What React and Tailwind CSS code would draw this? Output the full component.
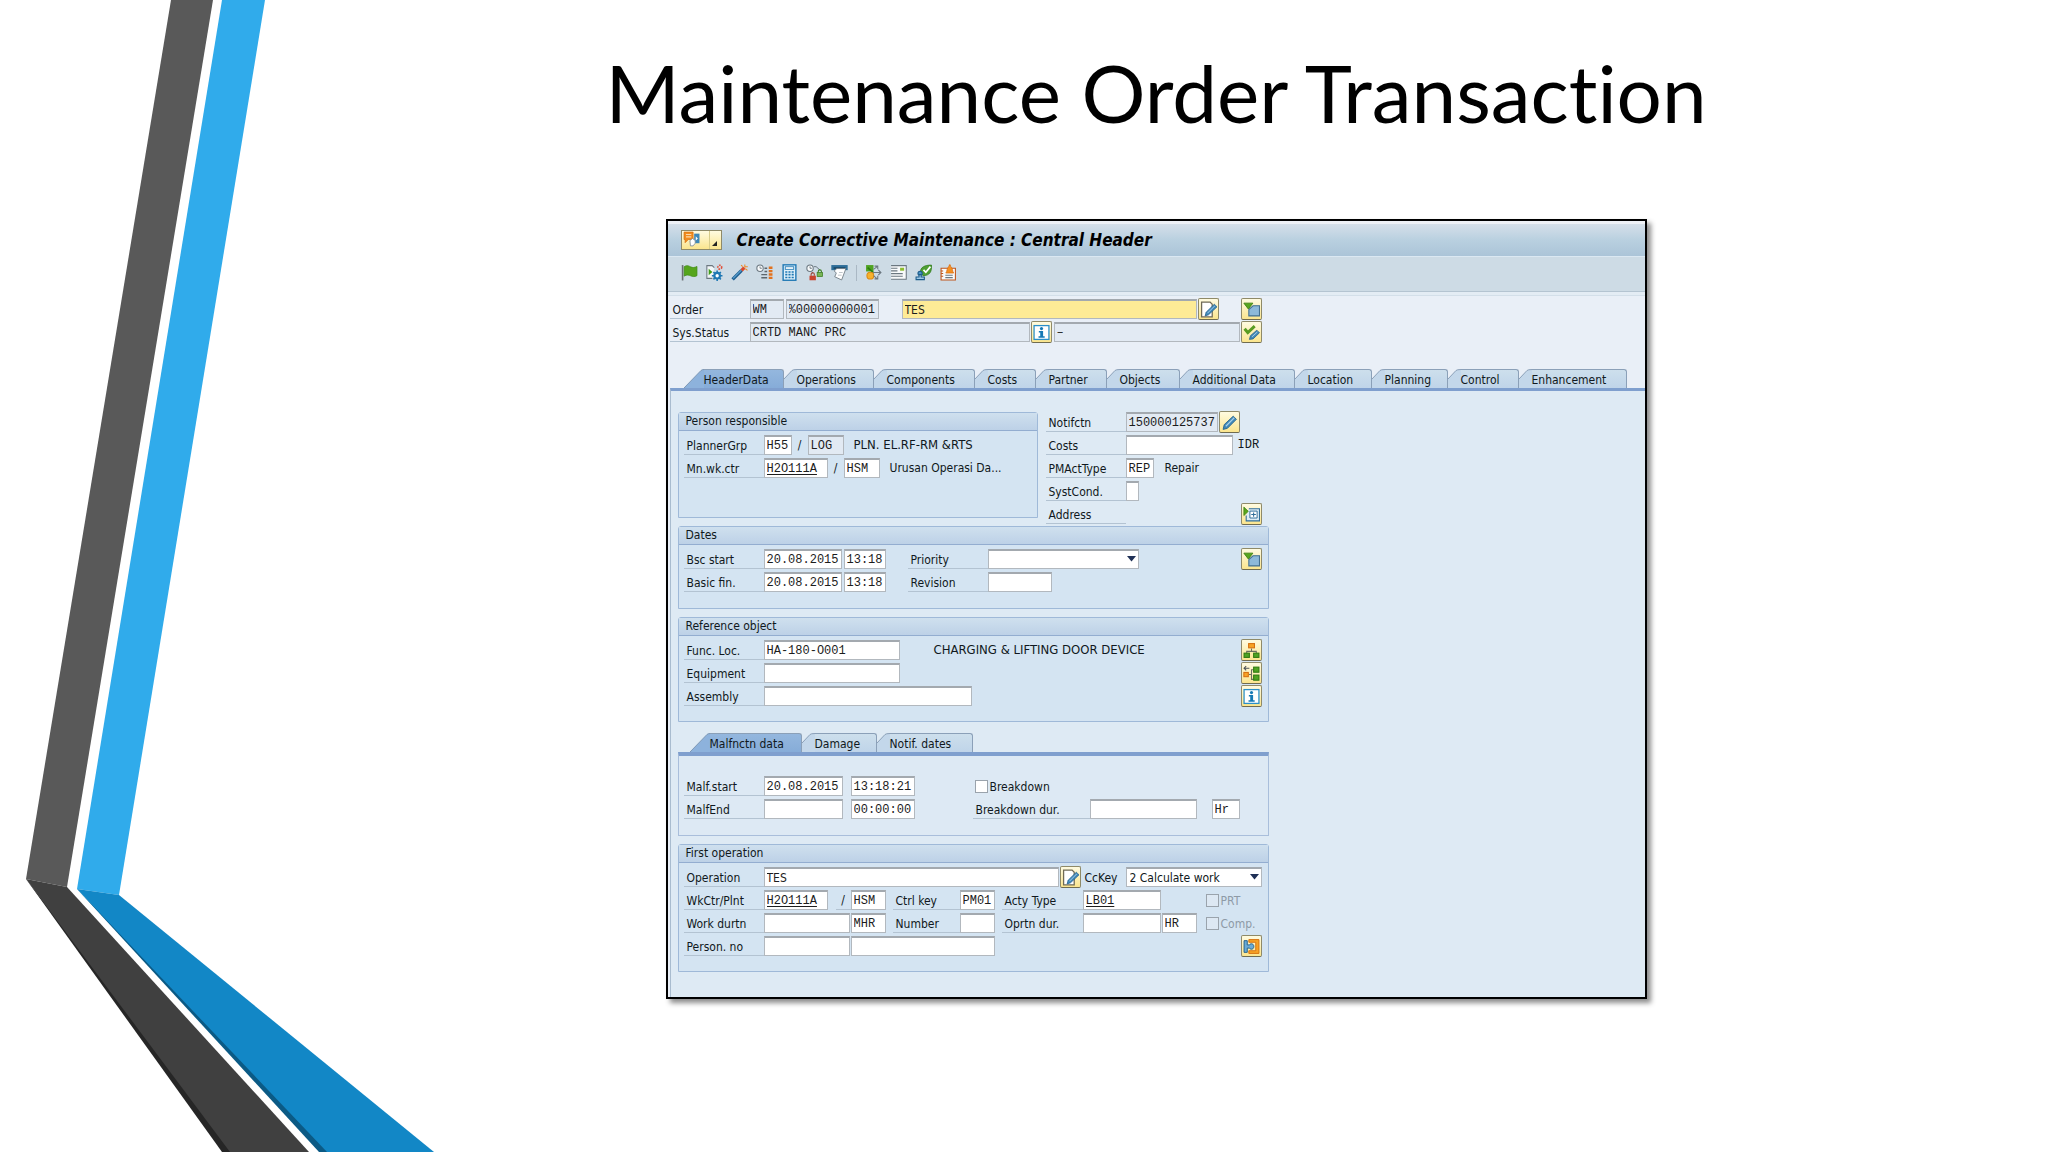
const UI = "font-['DejaVu_Sans_Condensed','DejaVu_Sans',sans-serif]";
const MONO = "font-['Liberation_Mono',monospace]";

function Ribbon() {
  return (
    <svg
      className="w-[434px] shrink-0 self-stretch"
      viewBox="0 0 434 1152"
      preserveAspectRatio="none"
      aria-hidden="true"
    >
      <polygon points="171,0 213,0 67,887 26,879" fill="#595959" />
      <polygon points="222,0 265,0 119,895 77,889" fill="#30abeb" />
      <polygon points="26,879 240,1152 222,1152" fill="#262626" />
      <polygon points="26,879 67,887 309,1152 230,1152" fill="#404040" />
      <polygon points="77,889 340,1152 319,1152" fill="#0b5a85" />
      <polygon points="77,889 119,895 434,1152 327,1152" fill="#1287c6" />
    </svg>
  );
}

/* ---------- icons ---------- */

function Svg({ children, className = "size-[17px]" }) {
  return (
    <svg className={className} viewBox="0 0 16 16" fill="none" aria-hidden="true">
      {children}
    </svg>
  );
}

const icons = {
  flag: (
    <Svg>
      <path d="M1.500 1v14.500" stroke="#6b6f73" strokeWidth="1.500" />
      <path d="M3 2.500c2.500-1.800 4.500-.6 6 .2 2 .9 3.800.8 6-.4V11c-2.200 1.100-4 1-6 .1-1.500-.7-3.500-1.300-6 .3z" fill="#55a51c" stroke="#3d8a12" strokeWidth=".7" />
    </Svg>
  ),
  docGear: (
    <Svg>
      <path d="M6 13.500H.8V1.500h5l2 2" stroke="#6b7780" fill="#f2f6f8" />
      <path d="M2.500 4.500 6 7.500l-3.500 3z" fill="#3f9c1b" />
      <path d="M10.500 6v10M5.500 11h10M7 7.500l7 7M14 7.500l-7 7" stroke="#1f78b4" strokeWidth="1.500" />
      <circle cx="10.500" cy="11" r="2.600" stroke="#1f78b4" strokeWidth="2" fill="#fff" />
      <circle cx="13" cy="3" r="1.800" stroke="#e0523c" strokeWidth="1.500" strokeDasharray="1.500 .8" />
    </Svg>
  ),
  wand: (
    <Svg>
      <path d="M1.500 14.500 10 6" stroke="#1d5f92" strokeWidth="3.200" />
      <path d="M2 13.500 9.500 6" stroke="#5fa3d3" strokeWidth="1" />
      <path d="m10 6 2.500-2.500" stroke="#d9472b" strokeWidth="3" />
      <path d="M13 .5v3M15.800 2.500h-2.500M15.500 6l-2-1.500M9.500 1l1.500 1.500" stroke="#f08a24" />
    </Svg>
  ),
  clockList: (
    <Svg>
      <circle cx="3.800" cy="4" r="3" stroke="#6b7780" fill="#f7f9fa" />
      <path d="M3.800 2.300V4H5.500" stroke="#6b7780" strokeWidth=".8" />
      <path d="M8 4h2.500M8 7h2.500M5 10h5.500M5 13h5.500" stroke="#5d666d" strokeWidth="1.400" />
      <path d="M12 3.500h3.500M12 6.700h3.500M12 9.900h3.500M12 13.100h3.500" stroke="#e2711d" strokeWidth="2.200" />
    </Svg>
  ),
  calculator: (
    <Svg>
      <rect x="2" y=".8" width="12" height="14.500" fill="#dff0fa" stroke="#1f78b4" strokeWidth="1.300" />
      <rect x="4" y="2.600" width="8" height="2.400" fill="#fff" stroke="#1f78b4" strokeWidth=".8" />
      <path d="M4 7.500h8M4 10h8M4 12.700h8" stroke="#1f78b4" strokeWidth="1.500" strokeDasharray="2 1" />
    </Svg>
  ),
  clockLocks: (
    <Svg>
      <circle cx="3.800" cy="4" r="3" stroke="#6b7780" fill="#f7f9fa" />
      <path d="M3.800 2.300V4H5.500M7.500 2.500h2l3.500 3M6 9V7.500" stroke="#6b7780" strokeWidth=".9" />
      <path d="M4.800 11V9.700c0-2 3-2 3 0V11" stroke="#a33a2a" />
      <rect x="3.300" y="11" width="6" height="4.300" fill="#c9432f" />
      <path d="M11.500 8V7c0-2 3-2 3 0v1" stroke="#3b7d20" />
      <rect x="10.500" y="8" width="5" height="3.800" fill="#79b556" stroke="#3b7d20" strokeWidth=".7" />
    </Svg>
  ),
  printer: (
    <Svg>
      <rect x=".3" y="1" width="15.400" height="4.800" fill="#2d6d98" />
      <path d="M2.500 3.800h11" stroke="#123c59" strokeWidth="1.200" />
      <path d="M5.500 4.300h8.500L10 15l-6.500-3 1.500-3.500-2-2z" fill="#fff" stroke="#6b7780" strokeWidth=".8" />
      <path d="M7.500 8h3.500M6.500 10.500h3.500" stroke="#b3bcc2" strokeWidth=".8" />
    </Svg>
  ),
  split: (
    <Svg>
      <path d="M1 1h7v6H1z" fill="#4fa322" />
      <path d="M2.500 3.500 8.500 8.500" stroke="#2d7d0e" strokeWidth="1.500" />
      <circle cx="5" cy="11" r="3.200" fill="#f6b12c" stroke="#de8a12" />
      <path d="M7.500 8h7M12.500 5.500 15 8l-2.500 2.500M8 5l3.500-2.500M8 11l3.500 3M9 2h3v3M9 14h3v-3" stroke="#6b7780" strokeWidth="1" />
    </Svg>
  ),
  card: (
    <Svg>
      <path d="M1 1.500h14.300v12.800H1z" fill="#f8fafb" />
      <path d="M1 1.500h14.300v12.800H1" stroke="#6b7780" />
      <rect x="9.500" y="3.500" width="3.800" height="2.800" fill="#8dbd2e" />
      <path d="M1 4h6M1 6.500h6M1 9h11M1 11.500h11" stroke="#6b7780" strokeWidth="1.100" />
    </Svg>
  ),
  stamp: (
    <Svg>
      <path d="M5 8c0-5 4-7 10.500-7 .5 6-1.500 10-8 10z" fill="#4fa033" stroke="#2f7a1b" strokeWidth=".7" />
      <path d="m8 5.500 2.200 2.300L14.500 2.500" stroke="#fff" strokeWidth="1.600" />
      <circle cx="4.800" cy="8.800" r="2" fill="#4a92c4" stroke="#1b5b8a" />
      <path d="M3.800 10h2v2.200h3v2.500H1v-2.500h2.800z" fill="#9fc9e6" stroke="#1b5b8a" />
    </Svg>
  ),
  noteBell: (
    <Svg>
      <path d="M1 4h13.500v11H1z" fill="#f8fafb" stroke="#c0551b" />
      <path d="M1 6.500h2M1 9h2M1 11.500h2" stroke="#c0551b" />
      <path d="M5 10.500h7M5 12.800h7" stroke="#6b7780" />
      <path d="M5.500 8.500c1.300-1 .8-5.500 3.200-6.500V.8h1V2c2.400 1 1.900 5.500 3.200 6.500z" fill="#f59021" stroke="#d86a0d" strokeWidth=".7" />
    </Svg>
  ),
  edit: (
    <Svg>
      <path d="M1.500 1h8l2 2v12h-10z" fill="#fff" stroke="#6f6a55" strokeWidth="1.200" />
      <path d="m4.800 14 1-3.500L13.500 3 16 5.500 8 13z" fill="#3f87b8" stroke="#1f5f8b" strokeWidth=".7" />
      <path d="m7 11.500 7-7" stroke="#a7d0ea" strokeWidth=".9" />
    </Svg>
  ),
  importBox: (
    <Svg>
      <path d="M9.500 4.500h6v9.500h-10V8" fill="#8db9da" />
      <path d="M10 4.500h5.500v9.500h-10V8l4-3.500z" fill="#8db9da" stroke="#44708f" />
      <path d="M.8 2h8.500L5 7.500z" fill="#58a51f" stroke="#3a800f" strokeWidth=".8" />
    </Svg>
  ),
  checkPencil: (
    <Svg>
      <path d="m1.500 4.500 3 3.500 6.500-6" stroke="#5a9c22" strokeWidth="2.800" />
      <path d="m6 14.500 1-3.500 6-5.200 2.500 2.500-6 5.700z" fill="#4388b6" stroke="#1f5f8b" strokeWidth=".7" />
      <path d="m8.500 12 5-4.500" stroke="#a7d0ea" strokeWidth=".9" />
    </Svg>
  ),
  info: (
    <Svg>
      <rect x="1" y="1.500" width="14" height="13" fill="#fff" stroke="#2a8fc9" strokeWidth="1.200" />
      <circle cx="8" cy="4.300" r="1.500" fill="#1579b5" />
      <path d="M5.500 6.500h4v5h1.500v1.500H5.200v-1.500H6.800V8H5.500z" fill="#1579b5" />
    </Svg>
  ),
  pencil: (
    <Svg>
      <path d="m2 14.500 1-4.500 8.500-8 3 3L6 13.500z" fill="#3f87b8" stroke="#1f5f8b" strokeWidth=".8" />
      <path d="m4.500 11.500 8-8" stroke="#a7d0ea" strokeWidth="1.100" />
    </Svg>
  ),
  openBox: (
    <Svg>
      <path d="M5.500 2.500h10v11.500H3V9" fill="#dcecf6" />
      <path d="M5.500 2.500h10v11.500H3V9" stroke="#2f6d99" />
      <path d="M6.500 4.800h6.800v6.500H6.500z" fill="#fff" stroke="#2f6d99" strokeWidth=".9" />
      <path d="M10 6v4.200M7.800 8h4.300" stroke="#2f6d99" />
      <path d="M.8 1v8L5 5z" fill="#58a51f" stroke="#3a800f" strokeWidth=".7" />
    </Svg>
  ),
  tree: (
    <Svg>
      <path d="M8 6v3M3.500 11V8.800h9V11" stroke="#6b6f60" />
      <rect x="5.300" y="1.500" width="5.500" height="4" fill="#f7a325" stroke="#d5700f" />
      <rect x="1" y="10.500" width="5" height="4" fill="#4fa322" stroke="#2f7a10" />
      <rect x="10" y="10.500" width="5" height="4" fill="#4fa322" stroke="#2f7a10" />
    </Svg>
  ),
  treeLeft: (
    <Svg>
      <path d="M1 3h5M3 1 1 3l2 2" stroke="#4c5257" />
      <path d="M5.500 9h2M10 4.500H8v9h2" stroke="#6b6f60" />
      <rect x=".8" y="7" width="4.200" height="4" fill="#f7a325" stroke="#d5700f" />
      <rect x="10" y="2" width="5" height="4.800" fill="#4fa322" stroke="#2f7a10" />
      <rect x="10" y="9.500" width="5" height="4.800" fill="#4fa322" stroke="#2f7a10" />
    </Svg>
  ),
  relation: (
    <Svg>
      <path d="M5.500 1.500h9.500v13H5.500v-2.500H12V4H5.500z" fill="#f7a325" stroke="#d5700f" strokeWidth=".9" />
      <path d="M1 2.500h3v4h2.200c.6-1.700 4-1.500 4 1.500s-3.400 3.200-4 1.500H4v4H1z" fill="#6aaad6" stroke="#1f5f8b" strokeWidth=".9" />
    </Svg>
  ),
  bubble: (
    <Svg>
      <path d="M1 1h8.500v7H5l-3 3V8H1z" fill="#f28c1e" stroke="#d5700f" strokeWidth=".7" />
      <path d="M2.800 3.300h5M2.800 5.500h5" stroke="#fbd9a8" />
      <path d="M10.500 2.500h5v9h-5z" fill="#3e88b8" />
      <path d="m12 5 2 2-2 2z" fill="#fff" />
      <path d="m6.500 9 2.500-2 2.500 2v2.500L9.500 14H7z" fill="#fff" stroke="#7c8a93" strokeWidth=".8" />
    </Svg>
  ),
};

/* ---------- form parts ---------- */

function IconButton({ icon, label, id, className = "" }) {
  return (
    <button
      id={id}
      type="button"
      aria-label={label}
      className={`flex h-[22px] w-[21px] shrink-0 items-center justify-center rounded-[2px] border border-[#8f8a68] border-b-[#6f6b50] bg-linear-to-b from-[#fffbe0] to-[#fbe58d] ${className}`}
    >
      {icons[icon]}
    </button>
  );
}

function Row({ children }) {
  return <div className="flex h-5 items-center">{children}</div>;
}

function Label({ htmlFor, children, className = "w-20" }) {
  return (
    <label
      htmlFor={htmlFor}
      className={`flex h-5 shrink-0 items-center border-b border-[#b3c3d2] pt-[2px] pl-[3px] text-[12px] whitespace-nowrap ${className}`}
    >
      {children}
    </label>
  );
}

function Field({ id, label, value = "", className = "", locked = false, look = MONO + " text-[12px]" }) {
  return (
    <input
      id={id}
      aria-label={label}
      defaultValue={value}
      readOnly={locked}
      className={`h-5 min-w-0 shrink-0 border border-t-2 border-[#b2b8be] border-t-[#a3a9af] pl-[2px] leading-none text-[#1c1c1c] outline-none ${locked ? "bg-[#e2eaf3]" : "bg-white"} ${look} ${className}`}
    />
  );
}

function Select({ id, options, className }) {
  return (
    <div className={`relative h-5 shrink-0 ${className}`}>
      <select
        id={id}
        className="block h-5 w-full appearance-none border border-t-2 border-[#b2b8be] border-t-[#a3a9af] bg-white pl-[3px] text-[12px] leading-none outline-none"
      >
        {options.map((o) => (
          <option key={o}>{o}</option>
        ))}
      </select>
      <svg className="pointer-events-none absolute top-[7px] right-[3px] h-[6px] w-[9px]" viewBox="0 0 9 6" aria-hidden="true">
        <path d="M0 0h9L4.500 5.500z" fill="#1f3056" />
      </svg>
    </div>
  );
}

function Check({ children, disabled = false, className = "" }) {
  return (
    <label className={`flex shrink-0 items-center gap-[2px] pt-px text-[12px] whitespace-nowrap ${disabled ? "text-[#8e9aa6]" : ""} ${className}`}>
      <input
        type="checkbox"
        disabled={disabled}
        className={`size-[13px] appearance-none border border-[#9aa3ac] ${disabled ? "bg-[#dde8f3]" : "bg-white"}`}
      />
      {children}
    </label>
  );
}

function Slash({ className = "" }) {
  return <span className={`shrink-0 text-center text-[12px] ${className}`}>/</span>;
}

function Group({ title, children, className = "" }) {
  return (
    <section className={`rounded-t-[3px] border border-[#9fb9d8] bg-[#d4e4f2] ${className}`}>
      <h2 className="h-[18px] border-b border-[#93add0] bg-linear-to-b from-[#cfe0ee] to-[#bdd1e7] pl-[7px] text-[12px] leading-[17px]">
        {title}
      </h2>
      <div className="flex flex-col gap-[3px] pt-1 pl-[5px]">{children}</div>
    </section>
  );
}

function Tab({ children, active = false, className }) {
  return (
    <button type="button" role="tab" aria-selected={active} className={`flex h-[19px] shrink-0 text-[12px] whitespace-nowrap ${className}`}>
      {active ? (
        <svg className="h-[19px] w-5 shrink-0" viewBox="0 0 20 19" aria-hidden="true">
          <path d="M0 19 17 1.500Q18 .5 20 .5V19z" fill="#8db2dc" />
          <path d="M0 19 17 1.500Q18 .5 20 .5" fill="none" stroke="#7d97b5" />
        </svg>
      ) : (
        <svg className="h-[19px] w-[13px] shrink-0" viewBox="0 0 13 19" aria-hidden="true">
          <path d="M0 19V10L8 1.500Q9 .5 13 .5V19z" fill="#c3d7ea" />
          <path d="M0 10 8 1.500Q9 .5 13 .5" fill="none" stroke="#8ba0b8" />
        </svg>
      )}
      <span
        className={`flex h-[19px] flex-1 items-center rounded-tr-[3px] border-t border-r border-[#8ba0b8] pt-px ${active ? "bg-linear-to-b from-[#94b7de] to-[#86acd8]" : "bg-linear-to-b from-[#cddfec] to-[#bfd4e9]"}`}
      >
        {children}
      </span>
    </button>
  );
}

const toolbar = [
  ["flag", "Release"],
  ["docGear", "Put in process"],
  ["wand", "Determine"],
  ["clockList", "Schedule"],
  ["calculator", "Calculate costs"],
  ["clockLocks", "Availability"],
  ["printer", "Print"],
];
const toolbarEnd = [
  ["split", "Settlement rule"],
  ["card", "Document data"],
  ["stamp", "Permits"],
  ["noteBell", "Notification"],
];

function ToolButton({ name, label }) {
  return (
    <button type="button" aria-label={label} className="flex w-[25px] items-center justify-center">
      {icons[name]}
    </button>
  );
}

function SapWindow() {
  return (
    <div
      className={`w-full max-w-[981px] border-2 border-black bg-[#e9eff7] text-[#101820] shadow-[4px_4px_5px_rgba(0,0,0,0.45)] ${UI}`}
    >
      <div className="border-t-[3px] border-[#eef1f6] bg-linear-to-b from-[#d5dfe9] via-[#b9d0e0] to-[#abc4d8]">
        <div className="flex h-8 items-center pb-px pl-[13px]">
          <button
            type="button"
            aria-label="Menu"
            className="flex h-5 w-[41px] items-center border border-[#8f8a68] bg-linear-to-b from-[#fffbe0] to-[#fbe58d] pl-px"
          >
            {icons.bubble}
            <span className="ml-[9px] h-full w-px bg-[#d8cd8c]" />
            <svg className="ml-px h-3 w-2 self-end" viewBox="0 0 8 12" aria-hidden="true">
              <path d="M6 4v5H1z" fill="#222" />
            </svg>
          </button>
          <h2 className="ml-[15px] text-[17px] leading-6 font-bold whitespace-nowrap text-black italic">
            Create Corrective Maintenance : Central Header
          </h2>
        </div>
      </div>

      <div className="flex h-9 items-center border-t border-b border-t-[#dbe8f2] border-b-[#b4c4d1] bg-[#cddbe5] pb-[3px] pl-[9px]">
        {toolbar.map(([n, l]) => (
          <ToolButton key={n} name={n} label={l} />
        ))}
        <span className="mx-1 h-4 w-px bg-[#aab8c4]" />
        {toolbarEnd.map(([n, l]) => (
          <ToolButton key={n} name={n} label={l} />
        ))}
      </div>
      <div className="h-1 border-b border-[#d3dfe9] bg-[#e3ecf4]" />

      <div className="flex flex-col gap-[3px] pt-[3px] pl-[2px]">
        <Row>
          <Label htmlFor="order" className="w-20">Order</Label>
          <Field id="order" value="WM" locked className="w-[34px]" />
          <Field label="Order number" value="%00000000001" locked className="ml-[2px] w-[93px]" />
          <Field label="Order text" value="TES" look="bg-[#feeb96]! text-[12px]" className="ml-[23px] w-[295px]" />
          <IconButton icon="edit" label="Edit long text" className="ml-px" />
          <IconButton icon="importBox" label="Expand order" className="ml-[22px]" />
        </Row>
        <Row>
          <Label htmlFor="status">Sys.Status</Label>
          <Field id="status" value="CRTD MANC PRC" locked className="w-[280px]" />
          <IconButton icon="info" label="Status info" className="ml-px" />
          <Field label="User status" value="–" locked className="ml-[2px] w-[186px]" />
          <IconButton icon="checkPencil" label="Edit status" className="ml-px" />
        </Row>
      </div>

      <div role="tablist" className="mt-[27px] flex pl-4">
        <Tab active className="w-[100px]">HeaderData</Tab>
        <Tab className="w-[90px]">Operations</Tab>
        <Tab className="w-[101px]">Components</Tab>
        <Tab className="w-[61px]">Costs</Tab>
        <Tab className="w-[71px]">Partner</Tab>
        <Tab className="w-[73px]">Objects</Tab>
        <Tab className="w-[115px]">Additional Data</Tab>
        <Tab className="w-[77px]">Location</Tab>
        <Tab className="w-[76px]">Planning</Tab>
        <Tab className="w-[71px]">Control</Tab>
        <Tab className="w-[108px]">Enhancement</Tab>
      </div>

      <div className="ml-[2px] border-t-[3px] border-l border-t-[#7f9fce] border-l-[#a9bccf] bg-[#deeaf4] pt-[21px] pb-[25px] pl-[7px]">
        <div className="flex h-[114px] items-start">
          <Group title="Person responsible" className="h-[106px] w-[360px]">
            <Row>
              <Label htmlFor="planner">PlannerGrp</Label>
              <Field id="planner" value="H55" className="w-7" />
              <Slash className="w-4" />
              <Field label="Planning plant" value="LOG" locked className="w-9" />
              <span className="ml-[10px] text-[13px]">PLN. EL.RF-RM &amp;RTS</span>
            </Row>
            <Row>
              <Label htmlFor="wkctr">Mn.wk.ctr</Label>
              <Field id="wkctr" value="H2O111A" className="w-16 underline underline-offset-2" />
              <Slash className="w-4" />
              <Field label="Work center plant" value="HSM" className="w-9" />
              <span className="ml-[10px] text-[12px]">Urusan Operasi Da...</span>
            </Row>
          </Group>
          <div className="ml-2 flex flex-col gap-[3px]">
            <Row>
              <Label htmlFor="notif">Notifctn</Label>
              <Field id="notif" value="150000125737" locked className="w-[92px]" />
              <IconButton icon="pencil" label="Edit notification" className="ml-px" />
            </Row>
            <Row>
              <Label htmlFor="costs">Costs</Label>
              <Field id="costs" className="w-[107px]" />
              <span className={`ml-[5px] text-[12px] ${MONO}`}>IDR</span>
            </Row>
            <Row>
              <Label htmlFor="acttype">PMActType</Label>
              <Field id="acttype" value="REP" className="w-7" />
              <span className="ml-[11px] text-[12px]">Repair</span>
            </Row>
            <Row>
              <Label htmlFor="syst">SystCond.</Label>
              <Field id="syst" className="w-[13px]" />
            </Row>
            <Row>
              <Label htmlFor="address">Address</Label>
              <IconButton id="address" icon="openBox" label="Address" className="ml-[115px]" />
            </Row>
          </div>
        </div>

        <Group title="Dates" className="h-[83px] w-[591px]">
          <Row>
            <Label htmlFor="bstart">Bsc start</Label>
            <Field id="bstart" value="20.08.2015" className="w-[78px]" />
            <Field label="Start time" value="13:18" className="ml-[2px] w-[42px]" />
            <Label htmlFor="prio" className="ml-[22px] w-20">Priority</Label>
            <Select id="prio" options={[""]} className="w-[151px]" />
            <IconButton icon="importBox" label="Expand dates" className="ml-[102px]" />
          </Row>
          <Row>
            <Label htmlFor="bfin">Basic fin.</Label>
            <Field id="bfin" value="20.08.2015" className="w-[78px]" />
            <Field label="Finish time" value="13:18" className="ml-[2px] w-[42px]" />
            <Label htmlFor="rev" className="ml-[22px] w-20">Revision</Label>
            <Field id="rev" className="w-16" />
          </Row>
        </Group>

        <Group title="Reference object" className="mt-2 h-[105px] w-[591px]">
          <Row>
            <Label htmlFor="func">Func. Loc.</Label>
            <Field id="func" value="HA-180-O001" className="w-[136px]" />
            <span className="ml-[34px] flex-1 text-[13px]">CHARGING &amp; LIFTING DOOR DEVICE</span>
            <IconButton icon="tree" label="Structure" className="mr-[6px]" />
          </Row>
          <Row>
            <Label htmlFor="equip">Equipment</Label>
            <Field id="equip" className="w-[136px]" />
            <IconButton icon="treeLeft" label="Hierarchy" className="mr-[6px] ml-auto" />
          </Row>
          <Row>
            <Label htmlFor="assy">Assembly</Label>
            <Field id="assy" className="w-[208px]" />
            <IconButton icon="info" label="Object info" className="mr-[6px] ml-auto" />
          </Row>
        </Group>

        <div role="tablist" className="mt-[11px] flex pl-3">
          <Tab active className="w-[112px]">Malfnctn data</Tab>
          <Tab className="w-[75px]">Damage</Tab>
          <Tab className="w-[96px]">Notif. dates</Tab>
        </div>
        <div className="flex h-[84px] w-[591px] flex-col gap-[3px] border border-t-4 border-[#a9bedb] border-t-[#7f9fce] bg-[#dde9f4] pt-5 pl-[5px]">
          <Row>
            <Label htmlFor="mstart">Malf.start</Label>
            <Field id="mstart" value="20.08.2015" className="w-[79px]" />
            <Field label="Malfunction start time" value="13:18:21" className="ml-2 w-16" />
            <Check className="ml-[60px]">Breakdown</Check>
          </Row>
          <Row>
            <Label htmlFor="mend">MalfEnd</Label>
            <Field id="mend" className="w-[79px]" />
            <Field label="Malfunction end time" value="00:00:00" className="ml-2 w-16" />
            <Label htmlFor="bdur" className="ml-[58px] w-[117px]">Breakdown dur.</Label>
            <Field id="bdur" className="w-[107px]" />
            <Field label="Duration unit" value="Hr" className="ml-[15px] w-7" />
          </Row>
        </div>

        <Group title="First operation" className="mt-2 h-32 w-[591px]">
          <Row>
            <Label htmlFor="oper">Operation</Label>
            <Field id="oper" value="TES" look="text-[12px]" className="w-[295px]" />
            <IconButton icon="edit" label="Edit operation text" className="ml-px" />
            <label htmlFor="cckey" className="ml-1 w-[41px] pt-px text-[12px]">CcKey</label>
            <Select id="cckey" options={["2 Calculate work"]} className="w-[136px]" />
          </Row>
          <Row>
            <Label htmlFor="wkp">WkCtr/Plnt</Label>
            <Field id="wkp" value="H2O111A" className="w-16 underline underline-offset-2" />
            <Slash className="ml-2 w-[15px] border-b border-[#b3c3d2]" />
            <Field label="Plant" value="HSM" className="w-[35px]" />
            <Label htmlFor="ctrl" className="ml-[7px] w-[67px]">Ctrl key</Label>
            <Field id="ctrl" value="PM01" className="w-[35px]" />
            <Label htmlFor="acty" className="ml-[7px] w-[81px]">Acty Type</Label>
            <Field id="acty" value="LB01" className="w-[78px] underline underline-offset-2" />
            <Check disabled className="ml-[45px]">PRT</Check>
          </Row>
          <Row>
            <Label htmlFor="wdur">Work durtn</Label>
            <Field id="wdur" className="w-[86px]" />
            <Field label="Work unit" value="MHR" className="ml-px w-[35px]" />
            <Label htmlFor="num" className="ml-[7px] w-[67px]">Number</Label>
            <Field id="num" className="w-[35px]" />
            <Label htmlFor="odur" className="ml-[7px] w-[81px]">Oprtn dur.</Label>
            <Field id="odur" className="w-[78px]" />
            <Field label="Operation unit" value="HR" className="ml-px w-[35px]" />
            <Check disabled className="ml-[9px]">Comp.</Check>
          </Row>
          <Row>
            <Label htmlFor="pers">Person. no</Label>
            <Field id="pers" className="w-[86px]" />
            <Field label="Person name" className="ml-px w-36" />
            <IconButton icon="relation" label="Assignments" className="mr-[6px] ml-auto" />
          </Row>
        </Group>
      </div>
    </div>
  );
}

export default function App() {
  return (
    <div className="flex min-h-screen bg-white">
      <Ribbon />
      <main className="flex flex-1 flex-col items-center pt-[52px] pr-[170px]">
        <h1 className="mb-[87px] font-['Lato',sans-serif] text-[80px] leading-[80px] whitespace-nowrap text-black [font-variant-ligatures:none]">
          Maintenance Order Transaction
        </h1>
        <SapWindow />
      </main>
    </div>
  );
}
